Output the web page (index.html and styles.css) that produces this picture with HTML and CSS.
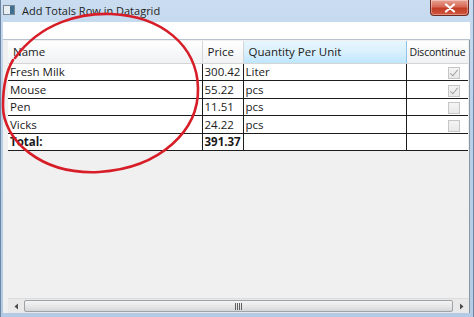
FILE: index.html
```html
<!DOCTYPE html>
<html lang="en">
<head>
    <meta charset="UTF-8">
    <meta name="viewport" content="width=device-width, initial-scale=1.0">
    <title>Add Totals Row in Datagrid</title>
    <link rel="stylesheet" href="styles.css">
</head>
<body>
    <div class="window">
        <header class="titlebar">
            <span class="app-icon"><span class="app-icon-pane"></span></span>
            <span class="title">Add Totals Row in Datagrid</span>
            <button class="close-button" aria-label="Close">
                <svg width="12" height="10" viewBox="0 0 12 10">
                    <path d="M2 1.5 L10 8.5 M10 1.5 L2 8.5" stroke="#ffffff" stroke-width="2.2" stroke-linecap="round"/>
                </svg>
            </button>
        </header>

        <main class="client">
            <div class="textbox"></div>

            <section class="datagrid">
                <table class="grid">
                    <colgroup>
                        <col class="col-name">
                        <col class="col-price">
                        <col class="col-qty">
                        <col class="col-disc">
                    </colgroup>
                    <thead>
                        <tr>
                            <th>Name</th>
                            <th>Price</th>
                            <th class="hover">Quantity Per Unit</th>
                            <th class="narrow">Discontinue</th>
                        </tr>
                    </thead>
                    <tbody>
                        <tr>
                            <td>Fresh Milk</td>
                            <td>300.42</td>
                            <td>Liter</td>
                            <td class="check-cell"><span class="check checked"></span></td>
                        </tr>
                        <tr>
                            <td>Mouse</td>
                            <td>55.22</td>
                            <td>pcs</td>
                            <td class="check-cell"><span class="check checked"></span></td>
                        </tr>
                        <tr>
                            <td>Pen</td>
                            <td>11.51</td>
                            <td>pcs</td>
                            <td class="check-cell"><span class="check"></span></td>
                        </tr>
                        <tr>
                            <td>Vicks</td>
                            <td>24.22</td>
                            <td>pcs</td>
                            <td class="check-cell"><span class="check"></span></td>
                        </tr>
                        <tr class="total-row">
                            <td>Total:</td>
                            <td>391.37</td>
                            <td></td>
                            <td></td>
                        </tr>
                    </tbody>
                </table>

                <div class="filler"></div>

                <div class="hscroll">
                    <span class="scroll-arrow">
                        <svg width="5" height="7" viewBox="0 0 5 7"><path d="M4 0.5 L0.5 3.5 L4 6.5 Z" fill="#4d4d4d"/></svg>
                    </span>
                    <span class="scroll-thumb">
                        <span class="grip"></span>
                    </span>
                    <span class="scroll-arrow">
                        <svg width="5" height="7" viewBox="0 0 5 7"><path d="M1 0.5 L4.5 3.5 L1 6.5 Z" fill="#4d4d4d"/></svg>
                    </span>
                </div>
            </section>
        </main>

        <!-- red marker drawn over the screenshot -->
        <svg class="annotation" width="474" height="317" viewBox="0 0 474 317">
            <path d="M14 58 C 40 22, 80 13, 110 14 C 160 16, 196 45, 197 88 C 198 130, 160 168, 98 172 C 40 175, 2 140, 2 106 C 2 85, 6 70, 12 60"
                  fill="none" stroke="#d71e28" stroke-width="2.6" stroke-linecap="round"/>
        </svg>
    </div>
</body>
</html>
```

FILE: styles.css
```css
/* Basic Reset */
* {
    margin: 0;
    padding: 0;
    box-sizing: border-box;
}

body {
    font-family: 'Open Sans', 'Noto Sans', sans-serif;
    font-size: 11.5px;
    color: #1a1a1a;
    background: #ffffff;
}

.window {
    position: relative;
    width: 474px;
    height: 317px;
    display: flex;
    flex-direction: column;
    background: linear-gradient(180deg, #c9dcf0 0%, #b9d0e9 40%, #b3cbe5 100%);
    border-left: 1px solid #6f86a3;
    border-right: 1px solid #6f86a3;
    overflow: hidden;
}

/* Title bar */
.titlebar {
    height: 22px;
    display: flex;
    align-items: flex-start;
    padding-left: 2px;
}

.app-icon {
    width: 12px;
    height: 10px;
    margin-top: 5px;
    background: #e9eef3;
    border: 1px solid #7a8794;
    display: flex;
    justify-content: flex-end;
}

.app-icon-pane {
    width: 4px;
    height: 100%;
    background: #3f6f8f;
}

.title {
    margin-left: 7px;
    margin-top: 3px;
    font-size: 11px;
    color: #1e1e1e;
}

.close-button {
    margin-left: auto;
    margin-right: 4px;
    width: 39px;
    height: 16px;
    border: 1px solid #6e2b23;
    border-top: none;
    border-radius: 0 0 4px 4px;
    background: linear-gradient(180deg, #e8a093 0%, #d66a56 45%, #c13c26 55%, #d2583e 100%);
    display: flex;
    align-items: center;
    justify-content: center;
    box-shadow: inset 0 0 0 1px rgba(255, 255, 255, 0.35);
}

/* Client area */
.client {
    flex: 1;
    display: flex;
    flex-direction: column;
    margin: 0 3px 4px 2px;
    background: #f0f0f0;
}

.textbox {
    height: 18px;
    background: #ffffff;
    border-bottom: 1px solid #b7c2cf;
}

.datagrid {
    flex: 1;
    display: flex;
    flex-direction: column;
    padding-top: 1px;
    padding-left: 5px;
    border-right: 1px solid #8a97a6;
}

.grid {
    width: 460px;
    table-layout: fixed;
    border-collapse: collapse;
}

.col-name { width: 194px; }
.col-price { width: 41px; }
.col-qty { width: 163px; }
.col-disc { width: 62px; }

.grid th {
    height: 22px;
    font-weight: normal;
    text-align: left;
    white-space: nowrap;
    overflow: hidden;
    padding: 0 0 0 5px;
    color: #1a1a1a;
    background: linear-gradient(180deg, #ffffff 0%, #f7f8f9 50%, #eff1f3 100%);
    border-right: 1px solid #d5d5d5;
    border-bottom: 1px solid #d5d5d5;
}

.grid th.hover {
    background: linear-gradient(180deg, #e6f5fd 0%, #d9f0fc 50%, #bee6fd 100%);
    border-right-color: #8ec3e3;
}

.grid th.narrow {
    border-right: none;
    padding-left: 3px;
    font-size: 10.5px;
    letter-spacing: -0.2px;
}

.grid td {
    height: 17.5px;
    padding: 0 0 0 2px;
    background: #ffffff;
    white-space: nowrap;
    overflow: hidden;
    border-bottom: 1px solid #1c1c1c;
    border-right: 1px solid #1c1c1c;
}

.grid td:last-child {
    border-right: none;
}

.total-row td {
    font-weight: bold;
}

.check-cell {
    text-align: right;
}

.check {
    display: inline-block;
    width: 12px;
    height: 12px;
    margin-right: 8px;
    vertical-align: middle;
    border: 1px solid #c6c6c6;
    background: linear-gradient(180deg, #f4f4f4, #e9e9e9);
    position: relative;
}

.check.checked::after {
    content: "";
    position: absolute;
    left: 3px;
    top: 0;
    width: 3px;
    height: 7px;
    border-right: 1.5px solid #a2a2a2;
    border-bottom: 1.5px solid #a2a2a2;
    transform: rotate(40deg);
}

.filler {
    flex: 1;
}

/* Horizontal scrollbar */
.hscroll {
    height: 15px;
    display: flex;
    background: #e9e9e9;
    border-top: 1px solid #dcdcdc;
}

.scroll-arrow {
    width: 16px;
    display: flex;
    align-items: center;
    justify-content: center;
}

.scroll-thumb {
    flex: 1;
    margin: 1px 0;
    border: 1px solid #9ea3a8;
    border-radius: 2px;
    background: linear-gradient(180deg, #f4f4f4 0%, #e8e8e8 50%, #d6d6d6 100%);
    display: flex;
    align-items: center;
    justify-content: center;
}

.grip {
    width: 7px;
    height: 7px;
    background: repeating-linear-gradient(90deg, #5f5f5f 0 1px, transparent 1px 2px);
}

/* Red hand drawn marker */
.annotation {
    position: absolute;
    left: 0;
    top: 0;
    pointer-events: none;
}
```
